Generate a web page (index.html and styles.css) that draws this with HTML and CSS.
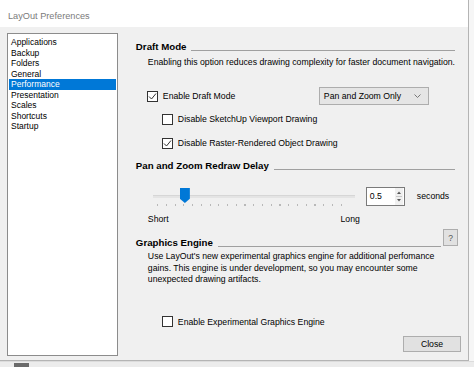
FILE: index.html
```html
<!DOCTYPE html>
<html lang="en">

<head>
  <meta charset="UTF-8">
  <meta name="viewport" content="width=device-width,initial-scale=1.0">
  <title>LayOut Preferences</title>
  <link rel="stylesheet" href="styles.css">
</head>

<body>
  <div class="window">
    <div class="titlebar">LayOut Preferences</div>

    <div class="content">
      <ul class="category-list">
        <li>Applications</li>
        <li>Backup</li>
        <li>Folders</li>
        <li>General</li>
        <li class="selected">Performance</li>
        <li>Presentation</li>
        <li>Scales</li>
        <li>Shortcuts</li>
        <li>Startup</li>
      </ul>

      <div class="panel">
        <!-- Draft Mode -->
        <div class="section-head"><span>Draft Mode</span></div>
        <div class="desc">Enabling this option reduces drawing complexity for faster document navigation.</div>

        <div class="row draft-row">
          <label class="check-label">
            <span class="checkbox checked">
              <svg width="9" height="9" viewBox="0 0 9 9"><polyline points="1,4.5 3.5,7 8,1.5" fill="none" stroke="#333" stroke-width="1"/></svg>
            </span>
            Enable Draft Mode
          </label>
          <div class="select">
            <span>Pan and Zoom Only</span>
            <svg width="7" height="4" viewBox="0 0 7 4"><polyline points="0.5,0.5 3.5,3.5 6.5,0.5" fill="none" stroke="#777" stroke-width="1"/></svg>
          </div>
        </div>

        <div class="row sub-row sketch-row">
          <label class="check-label">
            <span class="checkbox"></span>
            Disable SketchUp Viewport Drawing
          </label>
        </div>

        <div class="row sub-row raster-row">
          <label class="check-label">
            <span class="checkbox checked">
              <svg width="9" height="9" viewBox="0 0 9 9"><polyline points="1,4.5 3.5,7 8,1.5" fill="none" stroke="#333" stroke-width="1"/></svg>
            </span>
            Disable Raster-Rendered Object Drawing
          </label>
        </div>

        <!-- Redraw delay -->
        <div class="section-head delay-head"><span>Pan and Zoom Redraw Delay</span></div>

        <div class="row slider-row">
          <div class="slider">
            <div class="track"></div>
            <div class="ticks"></div>
            <span class="thumb"></span>
          </div>
          <div class="spinner">
            <span class="spin-value">0.5</span>
            <svg class="spin-buttons" width="8" height="17" viewBox="0 0 8 17">
              <rect x="0" y="0" width="8" height="17" fill="#f0f0f0"/>
              <polygon points="2,6 4,3.5 6,6" fill="#555"/>
              <line x1="1" y1="8.5" x2="7" y2="8.5" stroke="#c8c8c8" stroke-width="1"/>
              <polygon points="2,11 4,13.5 6,11" fill="#555"/>
            </svg>
          </div>
          <span class="unit">seconds</span>
        </div>

        <div class="range-labels">
          <span>Short</span>
          <span>Long</span>
        </div>

        <!-- Graphics Engine -->
        <div class="section-head engine-head">
          <span>Graphics Engine</span>
          <button class="help-button">?</button>
        </div>
        <p class="engine-text">Use LayOut's new experimental graphics engine for additional perfomance gains. This engine is under development, so you may encounter some unexpected drawing artifacts.</p>

        <div class="row sub-row engine-row">
          <label class="check-label">
            <span class="checkbox"></span>
            Enable Experimental Graphics Engine
          </label>
        </div>

        <div class="footer">
          <button class="close-button">Close</button>
        </div>
      </div>
    </div>
  </div>

  <div class="desk-strip"><span class="desk-item"></span></div>
</body>

</html>
```

FILE: styles.css
```css
body {
  margin: 0;
  padding: 0;
  background: #f6f6f6;
  font-family: "Liberation Sans", Arial, sans-serif;
  font-size: 8.7px;
  color: #000;
}

.window {
  width: 469px;
  height: 361px;
  box-sizing: border-box;
  display: flex;
  flex-direction: column;
  background: #f0f0f0;
  border-right: 1px solid #b4b4b4;
  border-bottom: 1px solid #b4b4b4;
}

.titlebar {
  height: 27px;
  box-sizing: border-box;
  padding: 5px 0 0 8px;
  line-height: 22px;
  background: #fff;
  color: #7b7b7b;
  font-size: 9.2px;
}

.content {
  flex: 1;
  display: flex;
}

/* --------------------------------------------------------------
   左側のカテゴリ一覧
   -------------------------------------------------------------- */
.category-list {
  list-style: none;
  margin: 6px 0 0 7px;
  padding: 3px 1px 0;
  width: 111px;
  height: 323px;
  box-sizing: border-box;
  background: #fff;
  border: 1px solid #8c8c8c;
}

.category-list li {
  line-height: 10.5px;
  padding-left: 2px;
  font-size: 8.5px;
  white-space: nowrap;
}

.category-list li.selected {
  background: #0078d7;
  color: #fff;
}

/* --------------------------------------------------------------
   右側の設定パネル
   -------------------------------------------------------------- */
.panel {
  flex: 1;
  padding: 13px 13px 0 18px;
}

.section-head {
  display: flex;
  align-items: flex-end;
  height: 14px;
  line-height: 14px;
  font-size: 9.7px;
  font-weight: bold;
}

.section-head::after {
  content: "";
  flex: 1;
  margin: 0 0 3px 5px;
  border-bottom: 1px solid #a0a0a0;
}

.delay-head {
  margin-top: 9px;
}

.engine-head {
  margin-top: 11px;
}

.engine-head .help-button {
  order: 2;
  align-self: flex-end;
  width: 15px;
  height: 17px;
  margin: 0 -3px 4px 2px;
  padding: 0;
  background: #e1e1e1;
  border: 1px solid #adadad;
  color: #555;
  font-family: inherit;
  font-size: 8.5px;
  font-weight: normal;
}

.desc {
  margin-top: 2px;
  padding-left: 12px;
  line-height: 12px;
  white-space: nowrap;
}

.row {
  display: flex;
  align-items: center;
}

.check-label {
  display: flex;
  align-items: center;
  gap: 5px;
  white-space: nowrap;
}

.checkbox {
  width: 11px;
  height: 11px;
  box-sizing: border-box;
  display: flex;
  align-items: center;
  justify-content: center;
  background: #fff;
  border: 1px solid #333;
}

.draft-row {
  margin-top: 19px;
  height: 18px;
  padding-left: 11px;
}

.draft-row .check-label {
  width: 172px;
}

.select {
  width: 110px;
  height: 18px;
  box-sizing: border-box;
  display: flex;
  align-items: center;
  justify-content: space-between;
  padding: 0 7px 0 4px;
  background: #e5e5e5;
  border: 1px solid #adadad;
}

.sub-row {
  height: 14px;
  padding-left: 26px;
}

.sketch-row {
  margin-top: 7px;
}

.raster-row {
  margin-top: 10px;
}

/* スライダー */
.slider-row {
  margin-top: 12px;
  height: 22px;
  padding-left: 17px;
}

.slider {
  position: relative;
  width: 202px;
  height: 22px;
  box-sizing: border-box;
  padding-top: 10px;
}

.track {
  height: 2px;
  background: #e4e4e4;
  border-top: 1px solid #d6d6d6;
}

.ticks {
  margin: 6px 0 0 4px;
  width: 188px;
  height: 2px;
  background: repeating-linear-gradient(to right, #b8b8b8 0 1px, transparent 1px 8.75px);
}

.thumb {
  position: absolute;
  top: 3px;
  left: 27px;
  width: 10px;
  height: 15px;
  background: #0078d7;
  clip-path: polygon(0 0, 100% 0, 100% 72%, 50% 100%, 0 72%);
}

.spinner {
  margin-left: 11px;
  width: 39px;
  height: 19px;
  box-sizing: border-box;
  display: flex;
  align-items: center;
  justify-content: space-between;
  padding: 0 1px 0 3px;
  background: #fff;
  border: 1px solid #7a7a7a;
}

.unit {
  margin-left: 12px;
}

.range-labels {
  margin-top: 6px;
  margin-left: 12px;
  width: 212px;
  display: flex;
  justify-content: space-between;
  line-height: 12px;
}

.engine-text {
  margin: 1px 0 0;
  padding-left: 12px;
  width: 295px;
  line-height: 11.5px;
}

.engine-row {
  margin-top: 29px;
}

.footer {
  margin: 7px -6px 0 0;
  display: flex;
  justify-content: flex-end;
}

.close-button {
  width: 58px;
  height: 16px;
  padding: 0;
  background: #e1e1e1;
  border: 1px solid #adadad;
  font-family: inherit;
  font-size: 8.7px;
  color: #000;
}

/* ウィンドウ下のデスクトップ部分 */
.desk-strip {
  height: 6px;
  background: #ececec;
  border-top: 1px solid #dcdcdc;
}

.desk-item {
  display: block;
  width: 15px;
  height: 5px;
  margin: 1px 0 0 14px;
  background: #6a6a6a;
}
```
